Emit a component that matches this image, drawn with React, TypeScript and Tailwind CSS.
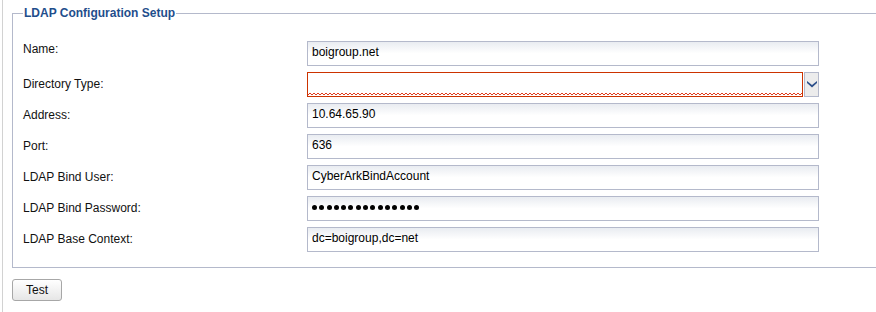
import React from 'react';

const fields = [
  { label: 'Name:', value: 'boigroup.net' },
  { label: 'Directory Type:', value: '', select: true },
  { label: 'Address:', value: '10.64.65.90' },
  { label: 'Port:', value: '636' },
  { label: 'LDAP Bind User:', value: 'CyberArkBindAccount' },
  { label: 'LDAP Bind Password:', value: '', password: true },
  { label: 'LDAP Base Context:', value: 'dc=boigroup,dc=net' },
];

const inputClass =
  'h-[25px] w-[512px] border border-[#b4b9cb] bg-gradient-to-b from-[#e9ecf1] via-white to-white px-[4px] pb-[3px] text-[12px] text-black outline-none';

const App: React.FC = () => {
  return (
    <div
      className="ml-[2px] min-h-[312px] border-l border-[#d2d2d2] pl-[9px] pt-[6px]"
      style={{ fontFamily: '"Liberation Sans", Arial, sans-serif' }}
    >
      <fieldset className="border-y border-l border-[#b4b9cb] pl-[10px] pt-[21px] pb-[9px]">
        <legend className="px-[1px] text-[12px] leading-[14px] font-bold text-[#1f4e8c]">
          LDAP Configuration Setup
        </legend>
        {fields.map((f, idx) => (
          <div key={f.label} className="mb-[6px] flex items-start">
            <label
              className={`w-[284px] text-[12px] leading-[14px] text-[#111] ${idx === 0 ? 'pt-[1px]' : 'pt-[5px]'}`}
            >
              {f.label}
            </label>
            {f.select ? (
              <div className="flex h-[25px] w-[512px]">
                <div className="relative h-[25px] w-[496px] border border-[#cc3300] bg-white">
                  <svg className="absolute bottom-0 left-0" width="494" height="4">
                    <defs>
                      <pattern id="zig" width="4" height="4" patternUnits="userSpaceOnUse">
                        <polyline points="0,3 2,1 4,3" fill="none" stroke="#e0391a" strokeWidth="1" />
                      </pattern>
                    </defs>
                    <rect width="494" height="4" fill="url(#zig)" />
                  </svg>
                </div>
                <div className="ml-[1px] flex h-[25px] w-[15px] items-center justify-center border border-[#b4b9cb] bg-[#ececec]">
                  <svg width="10" height="7" viewBox="0 0 10 7">
                    <path d="M0 0 L5 4 L10 0 L10 2 L5 6.5 L0 2 Z" fill="#2c4f8a" />
                  </svg>
                </div>
              </div>
            ) : f.password ? (
              <div className={`${inputClass} flex items-center gap-[2.3px]`}>
                {Array.from({ length: 15 }).map((_, i) => (
                  <span key={i} className="h-[5px] w-[5px] rounded-full bg-black" />
                ))}
              </div>
            ) : (
              <input readOnly type="text" value={f.value} className={inputClass} />
            )}
          </div>
        ))}
      </fieldset>
      <button className="mt-[11px] h-[22px] w-[50px] rounded-[3px] border border-[#a7a7a7] bg-gradient-to-b from-white to-[#e6e6e6] text-[12px] text-[#111]">
        Test
      </button>
    </div>
  );
};

export default App;
